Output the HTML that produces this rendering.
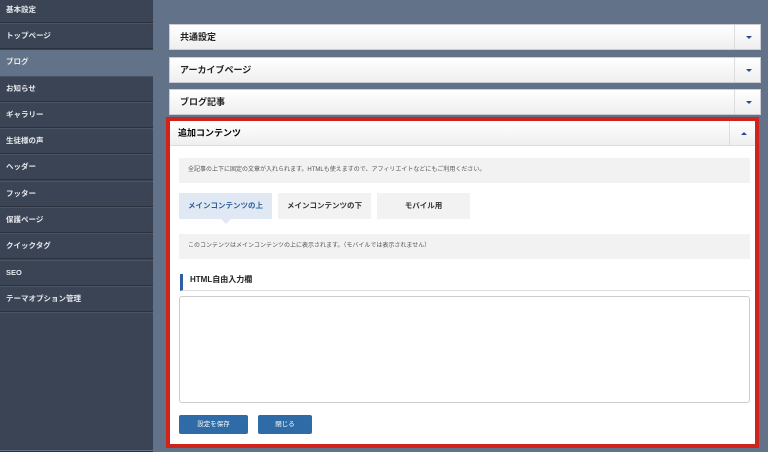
<!DOCTYPE html>
<html><head><meta charset="utf-8"><style>
*{box-sizing:border-box;margin:0;padding:0}
body{width:768px;height:450px;overflow:hidden;background:#627288;font-family:"Liberation Sans","Noto Sans CJK JP",sans-serif;position:relative}
.sb{position:absolute;left:0;top:0;width:153px;height:450px;background:#3b4454}
.it{position:absolute;left:0;width:153px;height:26px;border-bottom:1px solid #2a313c;border-top:1px solid #4a5465;color:#e6e9ee;font-size:7.5px;padding-left:6px;line-height:24px;font-weight:bold}
.it.a{background:#627288;border:none;width:155px}
.pn{position:absolute;left:169px;width:592px;height:26px;background:linear-gradient(#fff,#efefef);border:1px solid #c9ccd2;font-size:9px;font-weight:bold;color:#222;padding-left:10px;line-height:25px}
.ar{position:absolute;right:0;top:0;width:26px;height:100%;border-left:1px solid #ddd}
.ar:after{content:"";position:absolute;left:11px;top:11px;border:3px solid transparent;border-top:3px solid #2a4b8d}
.red{position:absolute;left:166px;top:117px;width:593px;height:331px;border:4px solid #d0231c;background:#fff}
.hd{height:25px;background:linear-gradient(#fff,#efefef);border-bottom:1px solid #ddd;font-size:9px;font-weight:bold;padding-left:8px;line-height:25px;position:relative}
.hd .ar:after{top:8px;border-top:3px solid transparent;border-bottom:3px solid #2a4b8d}
.box{position:absolute;left:9px;width:571px;height:25px;background:#f2f2f2;font-size:6px;color:#555;padding-left:9px;line-height:25px}
.tab{position:absolute;top:72px;height:26px;width:93px;background:#f2f2f2;font-size:7.5px;font-weight:bold;color:#333;text-align:center;line-height:26px}
.btn{position:absolute;top:294px;height:19px;background:#2f6ba6;color:#fff;font-size:6.5px;text-align:center;line-height:19px;border-radius:2px}
</style></head><body>
<div class="sb">
<div class="it" style="top:-3px">基本設定</div>
<div class="it" style="top:23px">トップページ</div>
<div class="it a" style="top:50px">ブログ</div>
<div class="it" style="top:76px">お知らせ</div>
<div class="it" style="top:102px">ギャラリー</div>
<div class="it" style="top:128px">生徒様の声</div>
<div class="it" style="top:154px">ヘッダー</div>
<div class="it" style="top:181px">フッター</div>
<div class="it" style="top:207px">保護ページ</div>
<div class="it" style="top:233px">クイックタグ</div>
<div class="it" style="top:260px">SEO</div>
<div class="it" style="top:286px">テーマオプション管理</div>
<div class="it" style="top:312px;height:140px"></div>
</div>
<div class="pn" style="top:24px">共通設定<div class="ar"></div></div>
<div class="pn" style="top:57px">アーカイブページ<div class="ar"></div></div>
<div class="pn" style="top:89px">ブログ記事<div class="ar"></div></div>
<div class="red">
<div class="hd">追加コンテンツ<div class="ar"></div></div>
<div class="box" style="top:37px">全記事の上下に固定の文章が入れられます。HTMLも使えますので、アフィリエイトなどにもご利用ください。</div>
<div class="tab" style="left:9px;background:#dfe8f3;color:#2d5f9a">メインコンテンツの上</div>
<div style="position:absolute;left:51px;top:98px;border:5px solid transparent;border-top:5px solid #dfe8f3"></div>
<div class="tab" style="left:108px">メインコンテンツの下</div>
<div class="tab" style="left:207px">モバイル用</div>
<div class="box" style="top:113px">このコンテンツはメインコンテンツの上に表示されます。（モバイルでは表示されません）</div>
<div style="position:absolute;left:10px;top:153px;width:571px;height:17px;border-bottom:1px solid #ddd;font-size:8px;font-weight:bold;color:#222;padding-left:7px;line-height:12px;border-left:3px solid #2e5fa0;border-left-width:3px"><span></span>HTML自由入力欄</div>
<div style="position:absolute;left:9px;top:175px;width:571px;height:107px;border:1px solid #ccc;border-radius:3px;background:#fff"></div>
<div class="btn" style="left:9px;width:69px">設定を保存</div>
<div class="btn" style="left:88px;width:54px">閉じる</div>
</div>
</body></html>
